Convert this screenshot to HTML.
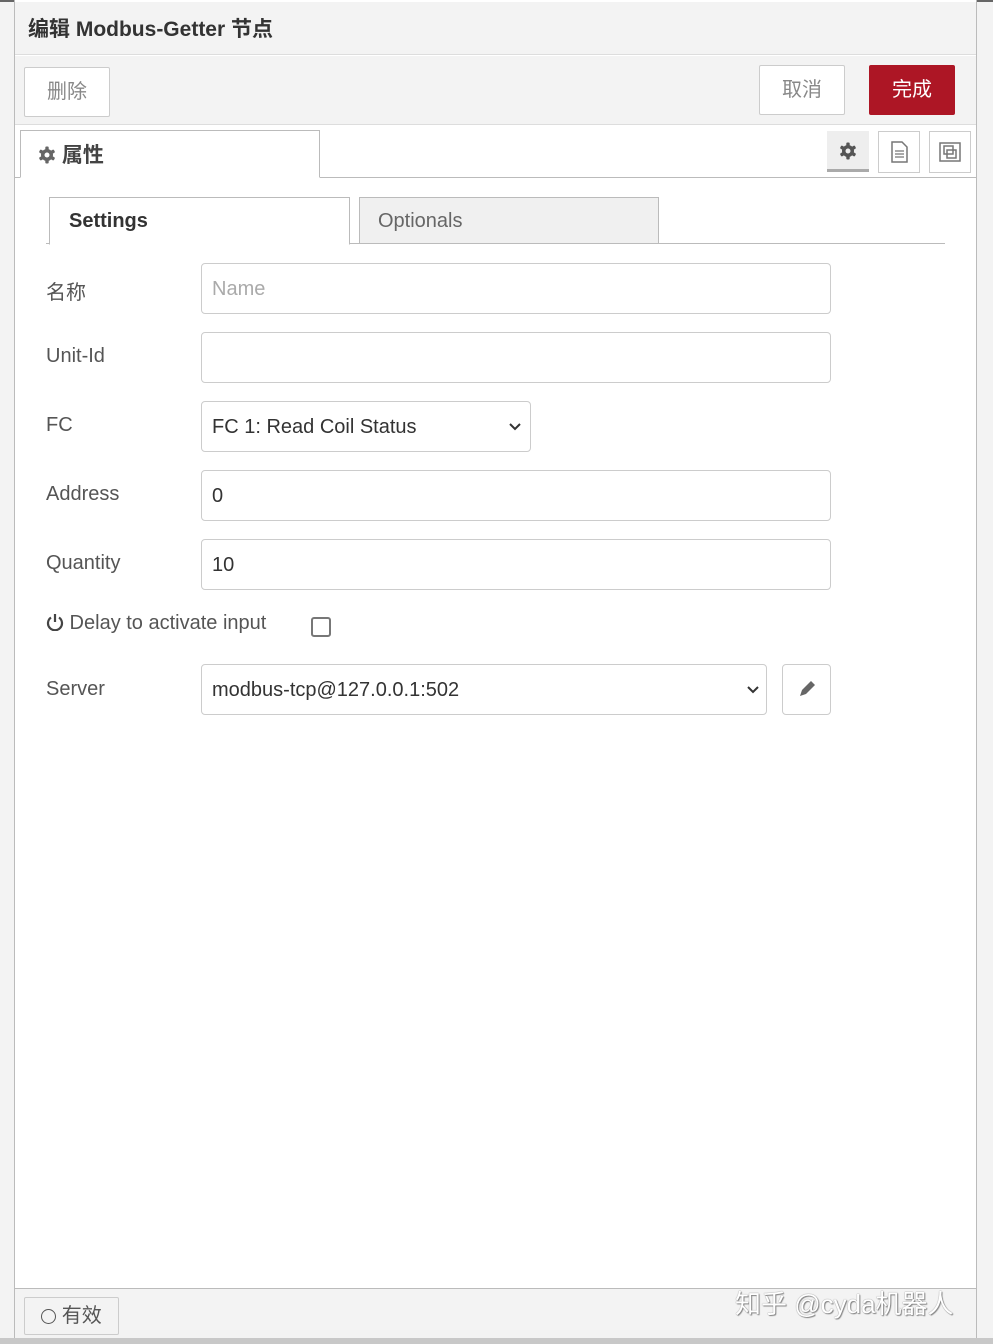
<!DOCTYPE html>
<html><head><meta charset="utf-8"><style>
*{box-sizing:border-box;margin:0;padding:0}
body{width:993px;height:1344px;background:#f3f3f3;position:relative;overflow:hidden;font-family:"Liberation Sans","Noto Sans CJK SC",sans-serif;color:#555}
.a{position:absolute}
.panel{left:14px;top:0;width:963px;height:1340px;background:#fff;border-left:1px solid #bbb;border-right:1px solid #bbb}
.btn{position:absolute;border:1px solid #ccc;background:#fff;color:#888;font-size:20px;text-align:center;border-radius:2px}
.inp{position:absolute;left:201px;width:630px;height:51px;border:1px solid #ccc;border-radius:4px;font-size:20px;color:#333;padding:14px 10px}
.lbl{position:absolute;left:46px;font-size:20px;color:#555}
</style></head><body>
<div class="a" style="left:0;top:0;width:993px;height:2px;background:#666"></div>
<div class="a panel"></div>
<div class="a" style="left:15px;top:2px;width:961px;height:53px;background:#f3f3f3;border-bottom:1px solid #ddd"></div>
<div class="a" style="left:28px;top:13px;font-size:21px;font-weight:bold;color:#333">编辑 Modbus-Getter 节点</div>
<div class="a" style="left:15px;top:56px;width:961px;height:69px;background:#f3f3f3;border-bottom:1px solid #ddd"></div>
<div class="btn" style="left:24px;top:67px;width:86px;height:50px;line-height:48px">删除</div>
<div class="btn" style="left:759px;top:65px;width:86px;height:50px;line-height:48px">取消</div>
<div class="btn" style="left:869px;top:65px;width:86px;height:50px;line-height:48px;background:#ad1625;border-color:#ad1625;color:#fff">完成</div>
<div class="a" style="left:15px;top:177px;width:961px;height:1px;background:#bbb"></div>
<div class="a" style="left:20px;top:130px;width:300px;height:48px;border:1px solid #bbb;border-bottom:1px solid #fff;background:#fff"></div>
<div class="a" style="left:38px;top:139px;font-size:21px;font-weight:bold;color:#444"><svg width="18" height="18" style="vertical-align:-2px"><g fill="#666"><circle cx="9" cy="9" r="6"/><rect x="7.3" y="0.5" width="3.4" height="17" rx="1"/><rect x="7.3" y="0.5" width="3.4" height="17" rx="1" transform="rotate(60 9 9)"/><rect x="7.3" y="0.5" width="3.4" height="17" rx="1" transform="rotate(120 9 9)"/></g><circle cx="9" cy="9" r="2.5" fill="#fff"/></svg> 属性</div>
<div class="a" style="left:827px;top:131px;width:42px;height:41px;background:#eee;border-bottom:3px solid #aaa"><svg width="42" height="38"><g fill="#555"><circle cx="21" cy="20" r="6"/><rect x="19.3" y="11.5" width="3.4" height="17" rx="1"/><rect x="19.3" y="11.5" width="3.4" height="17" rx="1" transform="rotate(60 21 20)"/><rect x="19.3" y="11.5" width="3.4" height="17" rx="1" transform="rotate(120 21 20)"/></g><circle cx="21" cy="20" r="2.5" fill="#eee"/></svg></div>
<div class="a" style="left:878px;top:131px;width:42px;height:42px;border:1px solid #ccc;background:#fff"><svg width="40" height="40"><path d="M13 10h10l5 5v15H13z" fill="none" stroke="#777" stroke-width="1.5"/><path d="M16 19h9M16 22h9M16 25h9" stroke="#777" stroke-width="1.3"/></svg></div>
<div class="a" style="left:929px;top:131px;width:42px;height:42px;border:1px solid #ccc;background:#fff"><svg width="40" height="40"><rect x="10" y="11" width="20" height="18" fill="none" stroke="#777" stroke-width="1.5"/><rect x="14" y="14" width="9" height="8" fill="none" stroke="#777" stroke-width="1.5"/><rect x="17" y="18" width="9" height="8" fill="none" stroke="#777" stroke-width="1.5"/></svg></div>
<div class="a" style="left:46px;top:243px;width:899px;height:1px;background:#bbb"></div>
<div class="a" style="left:49px;top:197px;width:301px;height:48px;border:1px solid #bbb;border-bottom:1px solid #fff;background:#fff;padding:12px 19px;font-size:20px;font-weight:bold;color:#333">Settings</div>
<div class="a" style="left:359px;top:197px;width:300px;height:47px;border:1px solid #bbb;background:#f0f0f0;padding:12px 18px;font-size:20px;color:#666">Optionals</div>
<div class="lbl" style="top:276px">名称</div>
<div class="inp" style="top:263px;color:#aaa">Name</div>
<div class="lbl" style="top:345px">Unit-Id</div>
<div class="inp" style="top:332px"></div>
<div class="lbl" style="top:414px">FC</div>
<div class="inp" style="top:401px;width:330px">FC 1: Read Coil Status<svg class="a" style="right:8px;top:20px" width="14" height="10"><path d="M2 2l5 5 5-5" fill="none" stroke="#333" stroke-width="2"/></svg></div>
<div class="lbl" style="top:483px">Address</div>
<div class="inp" style="top:470px">0</div>
<div class="lbl" style="top:552px">Quantity</div>
<div class="inp" style="top:539px">10</div>
<div class="lbl" style="top:612px"><svg width="18" height="18" style="vertical-align:-2px"><path d="M5 4.5A7 7 0 1 0 13 4.5" fill="none" stroke="#444" stroke-width="2.2"/><path d="M9 1v8" stroke="#444" stroke-width="2.2"/></svg> Delay to activate input</div>
<div class="a" style="left:311px;top:617px;width:20px;height:20px;border:2px solid #777;border-radius:3px"></div>
<div class="lbl" style="top:678px">Server</div>
<div class="inp" style="top:664px;width:566px">modbus-tcp@127.0.0.1:502<svg class="a" style="right:6px;top:20px" width="14" height="10"><path d="M2 2l5 5 5-5" fill="none" stroke="#333" stroke-width="2"/></svg></div>
<div class="a" style="left:782px;top:664px;width:49px;height:51px;border:1px solid #ccc;border-radius:4px"><svg width="47" height="49"><path d="M17 31l2-6 9-9 4 4-9 9z" fill="#666"/></svg></div>
<div class="a" style="left:15px;top:1288px;width:961px;height:50px;background:#f3f3f3;border-top:1px solid #bbb"></div>
<div class="btn" style="left:24px;top:1297px;width:95px;height:38px;line-height:36px;background:#f3f3f3;color:#555"><span style="display:inline-block;width:15px;height:15px;border:1.5px solid #555;border-radius:50%;vertical-align:-2px"></span> 有效</div>
<div class="a" style="left:735px;top:1284px;font-size:26px;color:#fff;text-shadow:0 0 1px #666,1px 1px 1px #888">知乎 @cyda机器人</div>
<div class="a" style="left:0;top:1338px;width:993px;height:6px;background:#c8c8c8"></div>
</body></html>
